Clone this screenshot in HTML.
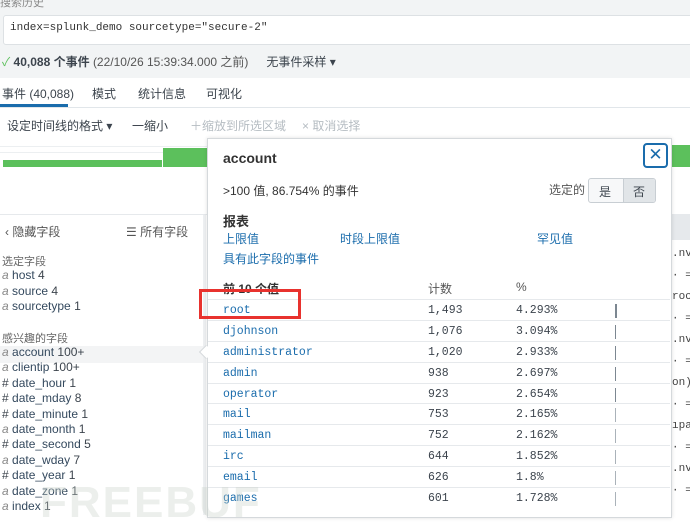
<!DOCTYPE html>
<html><head><meta charset="utf-8"><style>
*{margin:0;padding:0;box-sizing:border-box}
body{width:690px;height:515px;overflow:hidden;background:#fff;position:relative;font-family:"Liberation Sans","Noto Sans CJK SC",sans-serif;font-size:12px;color:#3c444d}
.abs{position:absolute;white-space:nowrap}
.mono{font-family:"Liberation Mono","DejaVu Sans Mono",monospace}
.link{color:#1a6cac}
.fl{color:#34495e}
</style></head><body>
<div class="abs" style="left:0;top:0;width:690px;height:78px;background:#f2f4f5"></div>
<div class="abs" style="left:0;top:-6px;font-size:11px;color:#888">搜索历史</div>
<div class="abs" style="left:3px;top:15px;width:690px;height:30px;background:#fff;border:1px solid #dde1e4;border-radius:3px"></div>
<div class="abs mono" style="left:10px;top:22px;font-size:11px;color:#333">index=splunk_demo sourcetype="secure-2"</div>
<div class="abs" style="left:2px;top:53px;font-size:12px"><span style="color:#5cc05c">✓</span> <b>40,088 个事件</b> <span style="color:#555">(22/10/26 15:39:34.000 之前)</span><span style="margin-left:18px">无事件采样 ▾</span></div>
<div class="abs" style="left:0;top:107px;width:690px;height:1px;background:#e1e6ea"></div>
<div class="abs" style="left:2px;top:85px">事件 (40,088)</div>
<div class="abs" style="left:0;top:104px;width:68px;height:3px;background:#1a6cac"></div>
<div class="abs" style="left:92px;top:85px">模式</div>
<div class="abs" style="left:138px;top:85px">统计信息</div>
<div class="abs" style="left:206px;top:85px">可视化</div>
<div class="abs" style="left:7px;top:117px">设定时间线的格式 ▾</div>
<div class="abs" style="left:132px;top:117px">一缩小</div>
<div class="abs" style="left:190px;top:117px;color:#b5bcc2">＋缩放到所选区域</div>
<div class="abs" style="left:302px;top:117px;color:#b5bcc2">× 取消选择</div>
<div class="abs" style="left:0;top:146px;width:690px;height:1px;background:#eceff1"></div>
<div class="abs" style="left:0;top:152px;width:690px;height:1px;background:#eceff1"></div>
<div class="abs" style="left:3px;top:160px;width:159px;height:7px;background:#5cc05c"></div>
<div class="abs" style="left:163px;top:148px;width:50px;height:19px;background:#5cc05c"></div>
<div class="abs" style="left:672px;top:145px;width:18px;height:22px;background:#5cc05c"></div>
<div class="abs" style="left:0;top:214px;width:690px;height:1px;background:#e6e9ec"></div>
<div class="abs" style="left:672px;top:215px;width:18px;height:25px;background:#e6e9ec"></div>
<div class="abs" style="left:203px;top:215px;width:3px;height:300px;background:#eef0f2"></div>
<div class="abs" style="left:5px;top:223px;color:#555">‹ 隐藏字段</div>
<div class="abs" style="left:126px;top:223px;color:#555">☰ 所有字段</div>
<div class="abs" style="left:2px;top:253px;font-size:11px;color:#666">选定字段</div>
<div class="abs" style="left:0;top:346px;width:203px;height:17px;background:#f3f4f5"></div>
<div class="abs" style="left:2px;top:268px;line-height:15.5px;color:#3c444d">
<i style="color:#888">a</i> <span class="fl">host</span> 4<br><i style="color:#888">a</i> <span class="fl">source</span> 4<br><i style="color:#888">a</i> <span class="fl">sourcetype</span> 1</div>
<div class="abs" style="left:2px;top:330px;font-size:11px;color:#666">感兴趣的字段</div>
<div class="abs" style="left:2px;top:345px;line-height:15.4px">
<i style="color:#888">a</i> <span class="fl">account</span> 100+<br><i style="color:#888">a</i> <span class="fl">clientip</span> 100+<br># <span class="fl">date_hour</span> 1<br># <span class="fl">date_mday</span> 8<br># <span class="fl">date_minute</span> 1<br><i style="color:#888">a</i> <span class="fl">date_month</span> 1<br># <span class="fl">date_second</span> 5<br><i style="color:#888">a</i> <span class="fl">date_wday</span> 7<br># <span class="fl">date_year</span> 1<br><i style="color:#888">a</i> <span class="fl">date_zone</span> 1<br><i style="color:#888">a</i> <span class="fl">index</span> 1</div>
<div class="abs mono" style="left:672px;top:244px;font-size:11px;line-height:21.5px;color:#444">.nva<br>· = <span style="background:#fdf2d0">s</span><br>root<br>· = <span style="background:#fdf2d0">s</span><br>.nva<br>· = <span style="background:#fdf2d0">s</span><br>on):<br>· = <span style="background:#fdf2d0">s</span><br>ıpac<br>· = <span style="background:#fdf2d0">s</span><br>.nva<br>· = <span style="background:#fdf2d0">s</span></div>
<!-- popup -->
<div class="abs" style="left:207px;top:138px;width:465px;height:380px;background:#fff;border:1px solid #d5d9dc;box-shadow:0 0 4px rgba(0,0,0,.12)"></div>
<div class="abs" style="left:201px;top:347px;width:10px;height:10px;background:#fff;border-left:1px solid #d5d9dc;border-bottom:1px solid #d5d9dc;transform:rotate(45deg)"></div>
<div class="abs" style="left:223px;top:150px;font-size:14px;font-weight:bold;color:#333">account</div>
<div class="abs" style="left:643px;top:143px;width:25px;height:25px;border:2px solid #1a6cac;border-radius:4px;color:#1a6cac;font-size:17px;text-align:center;line-height:20px">✕</div>
<div class="abs" style="left:223px;top:182px;color:#333">&gt;100 值, 86.754% 的事件</div>
<div class="abs" style="left:549px;top:181px;color:#555">选定的</div>
<div class="abs" style="left:588px;top:178px;width:68px;height:25px;border:1px solid #c8ced3;border-radius:3px;background:#f7f8f9;overflow:hidden"><div style="position:absolute;left:34px;top:0;width:34px;height:25px;background:#e1e5e8;border-left:1px solid #c8ced3"></div><span style="position:absolute;left:10px;top:4px">是</span><span style="position:absolute;left:44px;top:4px">否</span></div>
<div class="abs" style="left:223px;top:211px;font-size:13px;font-weight:bold;color:#333">报表</div>
<div class="abs link" style="left:223px;top:230px">上限值</div>
<div class="abs link" style="left:340px;top:230px">时段上限值</div>
<div class="abs link" style="left:537px;top:230px">罕见值</div>
<div class="abs link" style="left:223px;top:250px">具有此字段的事件</div>
<div class="abs" style="left:223px;top:280px;font-weight:bold;color:#333">前 10 个值</div>
<div class="abs" style="left:428px;top:280px;color:#555">计数</div>
<div class="abs" style="left:516px;top:280px;color:#555">%</div>
<div class="abs mono" style="left:208px;top:299px;width:462px;font-size:11.5px">
<style>.r{height:20.9px;border-top:1px solid #e6e9ec;position:relative;line-height:21px}.r span{position:absolute}.r .a{left:15px;color:#1a6cac}.r .b{left:220px}.r .c{left:308px}.r .d{left:407px;top:4px;width:1px;height:14px;background:#7c8791}</style>
<div class="r"><span class="a">root</span><span class="b">1,493</span><span class="c">4.293%</span><span class="d" style="width:2px"></span></div>
<div class="r"><span class="a">djohnson</span><span class="b">1,076</span><span class="c">3.094%</span><span class="d"></span></div>
<div class="r"><span class="a">administrator</span><span class="b">1,020</span><span class="c">2.933%</span><span class="d"></span></div>
<div class="r"><span class="a">admin</span><span class="b">938</span><span class="c">2.697%</span><span class="d"></span></div>
<div class="r"><span class="a">operator</span><span class="b">923</span><span class="c">2.654%</span><span class="d"></span></div>
<div class="r"><span class="a">mail</span><span class="b">753</span><span class="c">2.165%</span><span class="d" style="background:#aab2b9"></span></div>
<div class="r"><span class="a">mailman</span><span class="b">752</span><span class="c">2.162%</span><span class="d" style="background:#aab2b9"></span></div>
<div class="r"><span class="a">irc</span><span class="b">644</span><span class="c">1.852%</span><span class="d" style="background:#aab2b9"></span></div>
<div class="r"><span class="a">email</span><span class="b">626</span><span class="c">1.8%</span><span class="d" style="background:#aab2b9"></span></div>
<div class="r"><span class="a">games</span><span class="b">601</span><span class="c">1.728%</span><span class="d" style="background:#aab2b9"></span></div>
</div>
<div class="abs" style="left:199px;top:289px;width:102px;height:30px;border:3px solid #e8322e"></div>
<div class="abs" style="left:40px;top:478px;font-size:44px;font-weight:bold;color:rgba(200,210,200,.35);letter-spacing:2px">FREEBUF</div>
</body></html>
